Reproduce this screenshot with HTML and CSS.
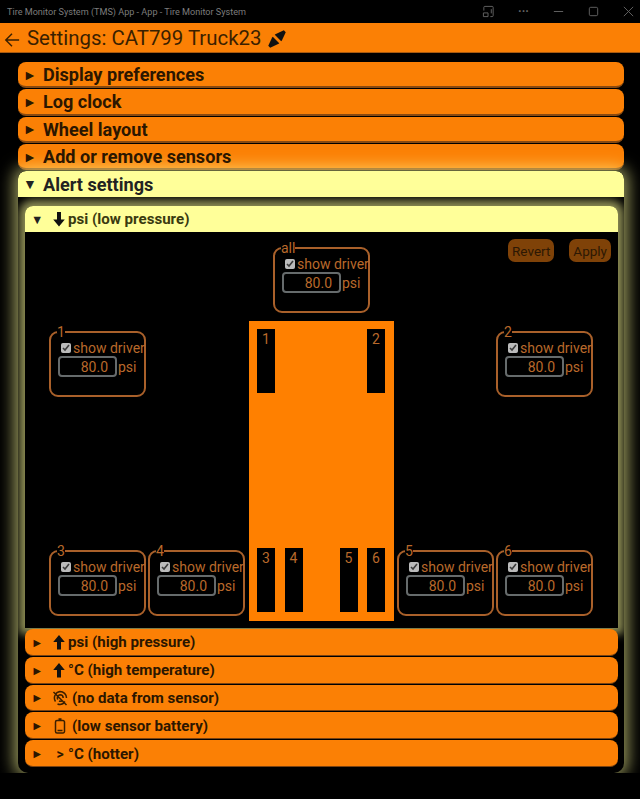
FILE: index.html
```html
<!DOCTYPE html>
<html lang="en">

<head>
    <meta charset="UTF-8">
    <meta name="viewport" content="width=device-width, initial-scale=1.0">
    <title>Tire Monitor System</title>
    <link rel="stylesheet" href="styles.css">
</head>

<body>
    <!-- Window title bar -->
    <div class="titlebar">
        <span class="window-title">Tire Monitor System (TMS) App - App - Tire Monitor System</span>
        <div class="window-controls">
            <svg class="win-icon" viewBox="0 0 14 14"><path d="M2 6V2.500A1 1 0 0 1 3 1.500H11A1 1 0 0 1 12 2.500V11.500A1 1 0 0 1 11 12.500H9M10 4.500V9M1.500 8.500H6.500V12.500H1.500Z" /></svg>
            <span class="win-dots">···</span>
            <svg class="win-icon" viewBox="0 0 14 14"><path d="M2 7H12" /></svg>
            <svg class="win-icon" viewBox="0 0 14 14"><rect x="2.500" y="2.500" width="9" height="9" rx="1.500" /></svg>
            <svg class="win-icon" viewBox="0 0 14 14"><path d="M2 2L12 12M12 2L2 12" /></svg>
        </div>
    </div>

    <!-- App header -->
    <header class="app-header">
        <svg class="back-arrow" viewBox="0 0 18 18"><path d="M17 9H2M9 2L2 9L9 16" /></svg>
        <h1>Settings: CAT799 Truck23</h1>
        <svg class="plug-icon" viewBox="0 0 24 24"><g transform="rotate(45 12 12)"><path d="M10.500 0H13.500L17 9.500V10.500H7V9.500Z" /><path d="M7 13.500H17V14.500L13.500 24H10.500L7 14.500Z" /></g></svg>
    </header>

    <main class="settings">
        <div class="section"><span class="section-caret">&#9658;</span><span class="section-name">Display preferences</span></div>
        <div class="section"><span class="section-caret">&#9658;</span><span class="section-name">Log clock</span></div>
        <div class="section"><span class="section-caret">&#9658;</span><span class="section-name">Wheel layout</span></div>
        <div class="section"><span class="section-caret">&#9658;</span><span class="section-name">Add or remove sensors</span></div>

        <div class="alert-panel">
            <div class="section section-open"><span class="section-caret">&#9660;</span><span class="section-name">Alert settings</span></div>
            <div class="alert-body">
                <div class="sub-open">
                    <div class="sub open">
                        <span class="caret">&#9660;</span>
                        <svg class="sub-icon" viewBox="0 0 12 16"><path d="M4 1H8V8.500H11.800L6 15.500L0.200 8.500H4Z" /></svg>
                        <span>psi (low pressure)</span>
                    </div>

                    <div class="canvas">
                        <div class="actions">
                            <button type="button">Revert</button>
                            <button type="button">Apply</button>
                        </div>

                        <div class="all-row">
                            <fieldset class="sensor">
                                <legend>all</legend>
                                <label><input type="checkbox" checked>show driver</label>
                                <div class="value"><input type="text" value="80.0">psi</div>
                            </fieldset>
                        </div>

                        <div class="layout">
                            <div class="side side-left">
                                <div class="side-row">
                                    <fieldset class="sensor">
                                        <legend>1</legend>
                                        <label><input type="checkbox" checked>show driver</label>
                                        <div class="value"><input type="text" value="80.0">psi</div>
                                    </fieldset>
                                </div>
                                <div class="side-row">
                                    <fieldset class="sensor">
                                        <legend>3</legend>
                                        <label><input type="checkbox" checked>show driver</label>
                                        <div class="value"><input type="text" value="80.0">psi</div>
                                    </fieldset>
                                    <fieldset class="sensor">
                                        <legend>4</legend>
                                        <label><input type="checkbox" checked>show driver</label>
                                        <div class="value"><input type="text" value="80.0">psi</div>
                                    </fieldset>
                                </div>
                            </div>

                            <div class="truck">
                                <div class="axle">
                                    <div class="wheel">1</div>
                                    <div class="wheel">2</div>
                                </div>
                                <div class="axle">
                                    <div class="wheel-pair">
                                        <div class="wheel">3</div>
                                        <div class="wheel">4</div>
                                    </div>
                                    <div class="wheel-pair">
                                        <div class="wheel">5</div>
                                        <div class="wheel">6</div>
                                    </div>
                                </div>
                            </div>

                            <div class="side side-right">
                                <div class="side-row row-end">
                                    <fieldset class="sensor">
                                        <legend>2</legend>
                                        <label><input type="checkbox" checked>show driver</label>
                                        <div class="value"><input type="text" value="80.0">psi</div>
                                    </fieldset>
                                </div>
                                <div class="side-row">
                                    <fieldset class="sensor">
                                        <legend>5</legend>
                                        <label><input type="checkbox" checked>show driver</label>
                                        <div class="value"><input type="text" value="80.0">psi</div>
                                    </fieldset>
                                    <fieldset class="sensor">
                                        <legend>6</legend>
                                        <label><input type="checkbox" checked>show driver</label>
                                        <div class="value"><input type="text" value="80.0">psi</div>
                                    </fieldset>
                                </div>
                            </div>
                        </div>
                    </div>
                </div>

                <div class="sub">
                    <span class="caret">&#9658;</span>
                    <svg class="sub-icon" viewBox="0 0 12 16"><path d="M4 15.500H8V8H11.800L6 1L0.200 8H4Z" /></svg>
                    <span>psi (high pressure)</span>
                </div>
                <div class="sub">
                    <span class="caret">&#9658;</span>
                    <svg class="sub-icon" viewBox="0 0 12 16"><path d="M4 15.500H8V8H11.800L6 1L0.200 8H4Z" /></svg>
                    <span>°C (high temperature)</span>
                </div>
                <div class="sub">
                    <span class="caret">&#9658;</span>
                    <svg class="sub-icon sub-icon-wide" viewBox="0 0 16 16"><path class="stroked" d="M3.500 11.500A6.500 6.500 0 0 1 8 1.500A6.500 6.500 0 0 1 14.500 8M5.800 9.500A3.200 3.200 0 0 1 8 4.800A3.200 3.200 0 0 1 11.200 8M13 11.500A6.500 6.500 0 0 1 5.500 14M10 10.800A3.200 3.200 0 0 1 7 11M1.500 2L14.500 15" /></svg>
                    <span>(no data from sensor)</span>
                </div>
                <div class="sub">
                    <span class="caret">&#9658;</span>
                    <svg class="sub-icon sub-icon-wide" viewBox="0 0 16 16"><path class="stroked" d="M6.500 1H9.500M5 2.500H11A1.500 1.500 0 0 1 12.500 4V13.500A1.500 1.500 0 0 1 11 15H5A1.500 1.500 0 0 1 3.500 13.500V4A1.500 1.500 0 0 1 5 2.500ZM5.500 12.500H10.500" /></svg>
                    <span>(low sensor battery)</span>
                </div>
                <div class="sub">
                    <span class="caret">&#9658;</span>
                    <span class="sub-icon sub-icon-wide gt">&gt;</span>
                    <span>°C (hotter)</span>
                </div>
            </div>
        </div>
    </main>
</body>

</html>
```
FILE: styles.css
```css
body {
    margin: 0;
    background-color: #000;
    font-family: Roboto, "Liberation Sans", sans-serif;
    color: #2b1600;
}

/* window chrome */
.titlebar {
    height: 23px;
    display: flex;
    align-items: center;
    justify-content: space-between;
    padding: 0 5px 0 7px;
}

.window-title {
    font-size: 9.1px;
    color: #7c7c7c;
}

.window-controls {
    display: flex;
    align-items: center;
    gap: 22px;
}

.win-icon {
    width: 13px;
    height: 13px;
    fill: none;
    stroke: #666;
    stroke-width: 1;
}

.win-dots {
    width: 13px;
    font-size: 12px;
    font-weight: bold;
    color: #666;
    text-align: center;
}

/* app header */
.app-header {
    height: 30px;
    display: flex;
    align-items: center;
    background-color: #fb8005;
    border-bottom: 1px solid #a85a10;
    box-sizing: border-box;
}

.back-arrow {
    width: 16px;
    height: 16px;
    margin: 4px 7px 0 4px;
    fill: none;
    stroke: #3a1f00;
    stroke-width: 1.6;
}

h1 {
    margin: 0;
    font-size: 20.4px;
    font-weight: 400;
    color: #3a1f00;
}

.plug-icon {
    width: 22px;
    height: 22px;
    margin: 3px 0 0 5px;
    fill: #111;
}

/* sections */
.settings {
    margin: 9px 16px 0 18px;
    display: flex;
    flex-direction: column;
    gap: 1px;
}

.section {
    height: 26.300px;
    display: flex;
    align-items: center;
    padding: 1px 0 0 5px;
    background-color: #fb8005;
    border-radius: 8px;
    border-bottom: 2px solid #8a4a10;
    box-sizing: border-box;
    color: #2b1600;
}

.section-caret {
    width: 20px;
    position: relative;
    z-index: 1;
    font-size: 14px;
}

.section-name {
    position: relative;
    z-index: 1;
    font-size: 18.1px;
    font-weight: bold;
}

.section-open {
    padding-top: 0;
    background-color: #ffff99;
    border-radius: 8px 8px 0 0;
    border-bottom: none;
    color: #222;
}

.alert-panel {
    background-color: #000;
    border-radius: 8px 8px 10px 10px;
    box-shadow: 0 0 16px 4px rgba(255, 255, 153, 0.6);
    overflow: hidden;
}

.alert-body {
    padding: 9px 6px 6px 7px;
    display: flex;
    flex-direction: column;
    gap: 1px;
}

.sub-open {
    border-radius: 8px 8px 0 0;
    box-shadow: 0 0 9px 6px rgba(255, 255, 153, 0.55);
}

.sub {
    height: 26.800px;
    flex-shrink: 0;
    position: relative;
    display: flex;
    align-items: center;
    padding-top: 1px;
    background-color: #fb8005;
    border-radius: 8px;
    border-bottom: 1px solid #7a4210;
    box-sizing: border-box;
    font-size: 15.1px;
    font-weight: bold;
    color: #2b1600;
}

.sub.open {
    height: 26px;
    padding-top: 0;
    background-color: #ffff99;
    border-radius: 8px 8px 0 0;
    border-bottom: none;
    color: #3a3a10;
}

.caret {
    width: 27px;
    padding-left: 6px;
    box-sizing: border-box;
    font-size: 12.5px;
    color: #2b1600;
}

.sub.open .caret {
    color: #222;
}

.sub-icon {
    width: 12px;
    height: 16px;
    margin: 0 3px 0 1px;
    fill: #111;
}

.sub-icon-wide {
    width: 16px;
    height: 16px;
    margin: 0 4px 0 0;
}

.stroked {
    fill: none;
    stroke: #3a1f00;
    stroke-width: 1.5;
}

.gt {
    margin: 0;
    font-size: 14px;
    line-height: 16px;
    text-align: center;
    color: #2b1600;
}

/* editing canvas */
.canvas {
    position: relative;
    height: 395.500px;
    box-sizing: border-box;
    padding: 15px 24px 7px;
    background-color: #000;
}

.actions {
    position: absolute;
    top: 7px;
    right: 7px;
    display: flex;
    gap: 15px;
}

.actions button {
    height: 23px;
    padding: 0 4px;
    background-color: #7f4208;
    border: none;
    border-radius: 7px;
    font-family: inherit;
    font-size: 13.5px;
    color: #2d1804;
}

.all-row {
    display: flex;
    justify-content: center;
}

.layout {
    margin-top: 8px;
    display: flex;
    gap: 3px;
}

.side {
    display: flex;
    flex-direction: column;
    justify-content: space-between;
    padding: 10px 0 5px;
}

.side-left {
    width: 197px;
}

.side-right {
    width: 196px;
}

.side-row {
    display: flex;
    gap: 2px;
}

.row-end {
    justify-content: flex-end;
}

.sensor {
    width: 97px;
    min-width: 0;
    height: 66px;
    margin: 0;
    padding: 0 0 0 7px;
    box-sizing: border-box;
    border: 2px solid #a9602a;
    border-radius: 9px;
    font-size: 14px;
    color: #b9692b;
}

.sensor legend {
    padding: 0;
    margin-left: -1px;
    line-height: 2px;
    font-size: 14px;
}

.sensor label {
    display: flex;
    align-items: center;
    height: 17px;
    margin-top: 6px;
    white-space: nowrap;
}

.sensor input[type="checkbox"] {
    width: 10px;
    height: 10px;
    margin: 0 2px 0 3px;
    accent-color: #bbb;
}

.value {
    display: flex;
    align-items: center;
}

.value input {
    width: 59px;
    height: 21px;
    padding: 0 7px 0 0;
    margin: 0 1px 0 0;
    box-sizing: border-box;
    background-color: #000;
    border: 2px solid #666b6c;
    border-radius: 4px;
    font-family: inherit;
    font-size: 14px;
    color: #b9692b;
    text-align: right;
}

/* truck diagram */
.truck {
    width: 145px;
    height: 300px;
    padding: 8px 9px 9px 8px;
    box-sizing: border-box;
    display: flex;
    flex-direction: column;
    justify-content: space-between;
    background-color: #ff8000;
}

.axle {
    display: flex;
    justify-content: space-between;
}

.wheel-pair {
    display: flex;
    gap: 9.500px;
}

.wheel {
    width: 18px;
    height: 64px;
    padding-top: 2px;
    box-sizing: border-box;
    background-color: #000;
    font-size: 14px;
    color: #b9692b;
    text-align: center;
}
```
